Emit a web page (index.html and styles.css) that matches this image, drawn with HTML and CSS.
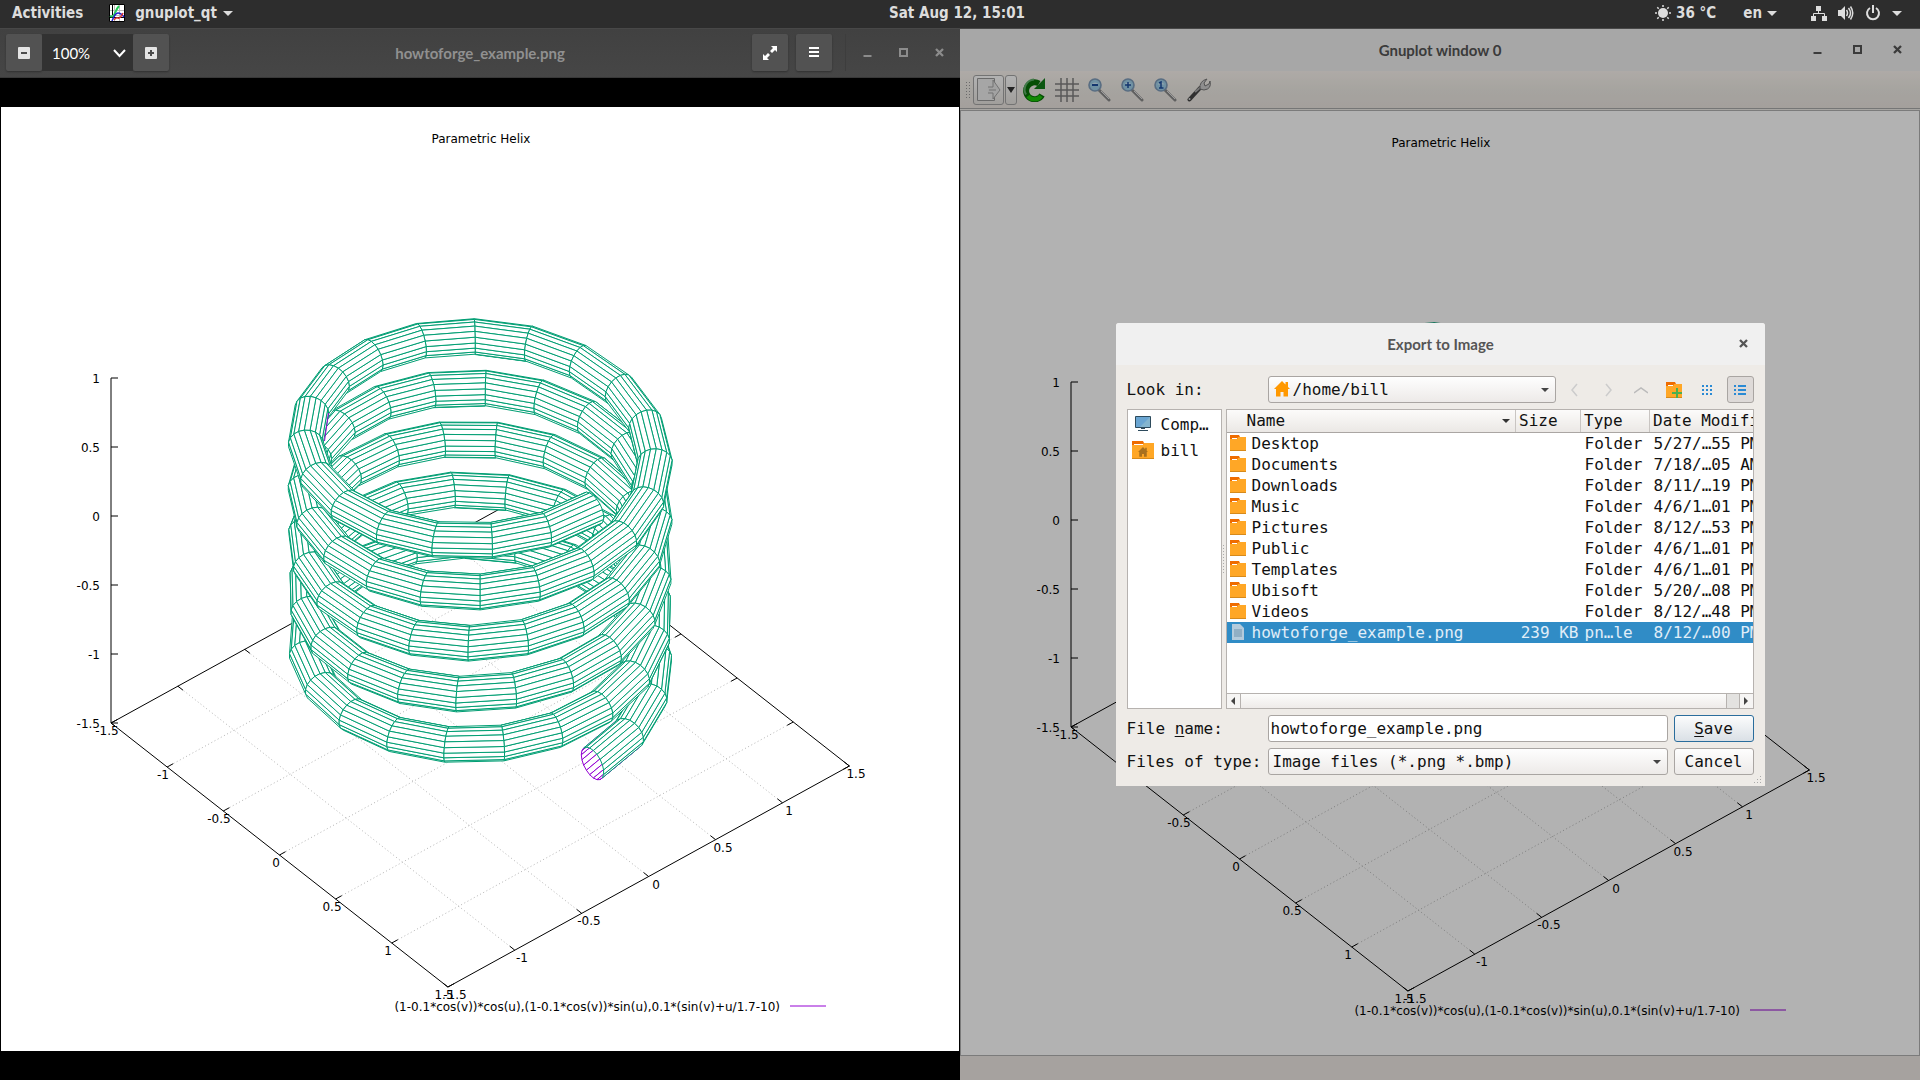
FILE: index.html
```html
<!DOCTYPE html>
<html lang="en">
<head>
<meta charset="UTF-8">
<meta name="viewport" content="width=device-width">
<title>Gnuplot window 0</title>
<link rel="stylesheet" href="styles.css">
</head>
<body>
<svg class="defs" width="0" height="0">
	<symbol id="folder" viewBox="0 0 16 16">
		<path d="M0 0h9l1 2v4H0z" fill="#ef6c00"/>
		<path d="M0 4h7l1-2h8v14H0z" fill="#ffa726"/>
		<path d="M2 3h5v1H2z" fill="#fff"/>
		<path d="M0 15h16v1H0z" fill="#d68a1c"/>
	</symbol>
	<symbol id="house" viewBox="0 0 16 16">
		<path d="M8 0L0 8h2v7.500h4.500V11h3v4.500H14V8h2l-2-2V1h-2.500v2.500z"/>
	</symbol>
	<symbol id="down" viewBox="0 0 10 5">
		<path d="M0 0h10L5 5z" fill="currentColor"/>
	</symbol>
	<symbol id="close" viewBox="0 0 9 9">
		<path d="M1 1l7 7M8 1L1 8" fill="none" stroke="currentColor" stroke-width="2.300"/>
	</symbol>
	<symbol id="maximize" viewBox="0 0 9 9">
		<path d="M1 1h7v7H1z" fill="none" stroke="currentColor" stroke-width="2"/>
	</symbol>
	<symbol id="minimize" viewBox="0 0 9 9">
		<path d="M.5 7h8v2h-8z" fill="currentColor"/>
	</symbol>
	<symbol id="lens" viewBox="0 0 24 24">
		<path d="M11 12l10 10" stroke="#8a8a8a" stroke-width="3" stroke-linecap="round"/>
		<path d="M13 13l8 8" stroke="#e0e0e0" stroke-width="1"/>
		<circle cx="7" cy="7" r="6" fill="#9fd0ea" stroke="#7f9cba" stroke-width="1.600"/>
		<path d="M3.500 6.500a4 4 0 0 1 7 0z" fill="#cfeaf8"/>
	</symbol>
</svg>

<header class="topbar">
	<div class="topbar-side">
		<button class="top-item">Activities</button>
		<button class="top-item app-menu">
			<svg width="16" height="18" viewBox="0 0 16 18">
				<path d="M.5.5h15v17H.5z" fill="#fff" stroke="#000"/>
				<path d="M5.500 1v16M10.500 1v16M1 6.500h14M1 11.500h14" stroke="#bbb"/>
				<path d="M3.500 1v10M1 13.500h14" stroke="#000"/>
				<path d="M1 12q3 2 5-3t4-7" fill="none" stroke="#2c5" stroke-width="2"/>
				<path d="M3 17q3-8 6-8t6 4" fill="none" stroke="#22c" stroke-width="1.500"/>
				<path d="M5 16q2-3 4-2t5-5" fill="none" stroke="#d33" stroke-width="1.500"/>
			</svg>
			<span>gnuplot_qt</span>
			<svg class="caret" width="10" height="5"><use href="#down"/></svg>
		</button>
	</div>
	<button class="top-item clock">Sat Aug 12, 15:01</button>
	<div class="topbar-side status">
		<button class="top-item weather">
			<svg width="16" height="16" viewBox="0 0 16 16">
				<circle cx="8" cy="8" r="5" fill="#ddd"/>
				<path d="M8 0v2M8 14v2M0 8h2M14 8h2M2.300 2.300l1.400 1.400M12.300 12.300l1.400 1.400M13.700 2.300l-1.400 1.400M3.700 12.300l-1.400 1.400" stroke="#ddd" stroke-width="1.500"/>
			</svg>
			<span>36 °C</span>
		</button>
		<button class="top-item lang"><span>en</span><svg width="10" height="5"><use href="#down"/></svg></button>
		<button class="top-item system" aria-label="System">
			<svg width="16" height="16" viewBox="0 0 16 16">
				<path d="M5 1h5v5H5zM0 11h5v5H0zM11 11h5v5h-5z" fill="#ddd"/>
				<path d="M7.500 5v3.500M2.500 12V8.500h11V12" fill="none" stroke="#ddd"/>
			</svg>
			<svg width="16" height="16" viewBox="0 0 16 16">
				<path d="M0 5h3l4-4v14l-4-4H0z" fill="#ddd"/>
				<path d="M8.500 5q2 3 0 6M10.500 3q4 5 0 10M12.500 1.500q4.500 6.500 0 13" fill="none" stroke="#ddd" stroke-width="1.500"/>
			</svg>
			<svg width="16" height="16" viewBox="0 0 16 16">
				<path d="M5 3a6 6 0 1 0 6 0M8 0v8" fill="none" stroke="#ddd" stroke-width="2"/>
			</svg>
			<svg width="10" height="5"><use href="#down"/></svg>
		</button>
	</div>
</header>

<main class="desktop">
	<section class="window viewer">
		<header class="viewer-bar">
			<div class="zoom">
				<button class="dark-btn" aria-label="Zoom out">
					<svg width="12" height="12" viewBox="0 0 12 12"><rect width="12" height="12" rx="1" fill="#e4e4e4"/><path d="M3 5h6v2H3z" fill="#4c4c4c"/></svg>
				</button>
				<label class="zoom-level">
					<select aria-label="Zoom"><option>100%</option></select>
					<svg width="13" height="9" viewBox="0 0 13 9"><path d="M1 1l5.500 6L12 1" fill="none" stroke="#fff" stroke-width="2"/></svg>
				</label>
				<button class="dark-btn" aria-label="Zoom in">
					<svg width="12" height="12" viewBox="0 0 12 12"><rect width="12" height="12" rx="1" fill="#e4e4e4"/><path d="M3 5h2V3h2v2h2v2H7v2H5V7H3z" fill="#4c4c4c"/></svg>
				</button>
			</div>
			<h1 class="viewer-title">howtoforge_example.png</h1>
			<div class="viewer-actions">
				<button class="dark-btn" aria-label="Fullscreen">
					<svg width="14" height="14" viewBox="0 0 14 14"><path d="M8 0h6v6l-2-2-3 3-2-2 3-3zM6 14H0V8l2 2 3-3 2 2-3 3z" fill="#fff"/></svg>
				</button>
				<button class="dark-btn" aria-label="Menu">
					<svg width="10" height="11" viewBox="0 0 10 11"><path d="M0 0h10v2H0zM0 4h10v2H0zM0 8h10v2H0z" fill="#fff"/></svg>
				</button>
				<div class="win-btns viewer-win">
					<button aria-label="Minimize"><svg width="9" height="9"><use href="#minimize"/></svg></button>
					<button aria-label="Maximize"><svg width="9" height="9"><use href="#maximize"/></svg></button>
					<button aria-label="Close"><svg width="9" height="9"><use href="#close"/></svg></button>
				</div>
			</div>
		</header>
		<div class="image-area">
			<svg class="plot" viewBox="0 0 958 944"></svg>
		</div>
	</section>

	<section class="window gnuplot">
		<header class="gnuplot-bar">
			<h1 class="gnuplot-title">Gnuplot window 0</h1>
			<div class="win-btns">
				<button aria-label="Minimize"><svg width="9" height="9"><use href="#minimize"/></svg></button>
				<button aria-label="Maximize"><svg width="9" height="9"><use href="#maximize"/></svg></button>
				<button aria-label="Close"><svg width="9" height="9"><use href="#close"/></svg></button>
			</div>
		</header>
		<div class="toolbar">
			<span class="grip"></span>
			<button class="tool framed" aria-label="Export">
				<svg width="24" height="24" viewBox="0 0 24 24">
					<path d="M.5.5h17v22H.500z" fill="#eee" stroke="#999"/>
					<path d="M11 9h5V2l7 10-7 9v-6h-5M12 12h7" fill="#e8e8e8" stroke="#a4a4a4"/>
				</svg>
			</button>
			<button class="tool framed drop" aria-label="Export options"><svg width="8" height="6" viewBox="0 0 8 6"><path d="M0 0h8L4 6z" fill="#333"/></svg></button>
			<button class="tool" aria-label="Replot">
				<svg width="24" height="24" viewBox="0 0 24 24">
					<path d="M17 5.500A8.500 8.500 0 1 0 20 17" fill="none" stroke="#087008" stroke-width="6"/>
					<path d="M12 1.500a10 10 0 0 0-8 15" fill="none" stroke="#5fae69" stroke-width="2"/>
					<path d="M6 18a8 8 0 0 0 13 0" fill="none" stroke="#1bc408" stroke-width="4"/>
					<path d="M23 0v11H12z" fill="#107c18"/>
				</svg>
			</button>
			<button class="tool" aria-label="Grid">
				<svg width="24" height="24" viewBox="0 0 24 24"><path d="M6 0v24M12 0v24M18 0v24M0 6h24M0 12h24M0 18h24" stroke="#808080" stroke-width="1.500"/></svg>
			</button>
			<button class="tool" aria-label="Previous zoom">
				<svg width="24" height="24" viewBox="0 0 24 24"><use href="#lens"/><path d="M4 7h6" stroke="#1e4fa0" stroke-width="2"/></svg>
			</button>
			<button class="tool" aria-label="Next zoom">
				<svg width="24" height="24" viewBox="0 0 24 24"><use href="#lens"/><path d="M4 7h6M7 4v6" stroke="#1e4fa0" stroke-width="1.500"/></svg>
			</button>
			<button class="tool" aria-label="Autoscale">
				<svg width="24" height="24" viewBox="0 0 24 24"><use href="#lens"/><path d="M5 5l2-1v6M5 10h4.500" fill="none" stroke="#1e4fa0" stroke-width="1.500"/></svg>
			</button>
			<button class="tool" aria-label="Settings">
				<svg width="24" height="24" viewBox="0 0 24 24">
					<path d="M2.500 21.500L13 10" stroke="#444" stroke-width="4" stroke-linecap="round"/>
					<path d="M8 14l7-6" stroke="#aaa" stroke-width="2"/>
					<path d="M13 11q-1-8 7-10l-3 4 1 3 4-2 1-3q2 8-6 9z" fill="#ccc" stroke="#777"/>
					<circle cx="2.500" cy="21" r="1" fill="#ddd"/>
				</svg>
			</button>
		</div>
		<div class="canvas">
			<svg class="plot" viewBox="0 0 958 944"></svg>
		</div>
		<footer class="statusbar"></footer>

		<div class="dim">
			<form class="dialog" onsubmit="return false">
				<header class="dialog-bar">
					<h2 class="dialog-title">Export to Image</h2>
					<button type="button" class="dialog-close" aria-label="Close"><svg width="9" height="9"><use href="#close"/></svg></button>
				</header>
				<div class="dialog-body">
					<div class="field-row">
						<label class="field-label" for="lookin">Look in:</label>
						<div class="combo lookin">
							<svg class="combo-icon" width="16" height="16" fill="#ff9800"><use href="#house"/></svg>
							<select id="lookin"><option>/home/bill</option></select>
							<svg class="combo-arrow" width="8" height="4"><use href="#down"/></svg>
						</div>
						<div class="nav-btns">
							<button type="button" aria-label="Back"><svg width="8" height="14" viewBox="0 0 8 14"><path d="M6 1L1 7l5 6" fill="none" stroke="#ccc" stroke-width="1.500"/></svg></button>
							<button type="button" aria-label="Forward"><svg width="8" height="14" viewBox="0 0 8 14"><path d="M2 1l5 6-5 6" fill="none" stroke="#ccc" stroke-width="1.500"/></svg></button>
							<button type="button" aria-label="Parent"><svg width="14" height="8" viewBox="0 0 14 8"><path d="M0 7l7-5 7 5" fill="none" stroke="#bbb" stroke-width="1.500"/></svg></button>
							<button type="button" aria-label="New folder"><svg width="16" height="16" viewBox="0 0 16 16"><use href="#folder"/><path d="M11 6v10M6 11h10" stroke="#4caf50" stroke-width="2"/></svg></button>
							<button type="button" aria-label="List view"><svg width="10" height="10" viewBox="0 0 10 10"><path d="M0 1h10M0 5h10M0 9h10" stroke="#2a8ad4" stroke-width="2" stroke-dasharray="2 2"/></svg></button>
							<button type="button" class="pressed" aria-label="Detail view"><svg width="12" height="10" viewBox="0 0 12 10"><path d="M0 1h2m2 0h8M0 5h2m2 0h8M0 9h2m2 0h8" stroke="#2a8ad4" stroke-width="2"/></svg></button>
						</div>
					</div>

					<div class="panes">
						<ul class="places">
							<li>
								<svg width="22" height="18" viewBox="0 0 22 18">
									<path d="M3.500 1.500h15v11h-15z" fill="#6aa5d2" stroke="#2d4a5c"/>
									<path d="M18 2v10H8z" fill="#84b5cf"/>
									<path d="M9 13h4v1H9zM6 15h10v1H6z" fill="#2d4a5c"/>
								</svg>
								<span>Comp…</span>
							</li>
							<li>
								<svg width="22" height="18" viewBox="0 0 22 18">
									<path d="M0 0h11l1 2v4H0z" fill="#ef6c00"/>
									<path d="M0 4h10l2-2h10v15H0z" fill="#ffa726"/>
									<path d="M2 3h9v1H2z" fill="#fff"/>
									<path d="M0 17h22v1H0z" fill="#d68a1c"/>
									<use href="#house" x="5" y="6" width="12" height="10" fill="#a8701e"/>
								</svg>
								<span>bill</span>
							</li>
						</ul>
						<span class="splitter"></span>
						<div class="files">
							<table>
								<colgroup><col class="c-name"><col class="c-size"><col class="c-type"><col class="c-date"></colgroup>
								<thead>
									<tr><th class="h-name">Name<svg class="sort" width="8" height="4"><use href="#down"/></svg></th><th>Size</th><th>Type</th><th>Date Modified</th></tr>
								</thead>
								<tbody id="rows"></tbody>
							</table>
							<div class="scroll"><button type="button" aria-label="Scroll left"><svg width="4" height="8" viewBox="0 0 4 8"><path d="M4 0v8L0 4z" fill="#444"/></svg></button><span class="thumb"></span><span class="track"></span><button type="button" aria-label="Scroll right"><svg width="4" height="8" viewBox="0 0 4 8"><path d="M0 0v8l4-4z" fill="#444"/></svg></button></div>
						</div>
					</div>

					<div class="field-row">
						<label class="field-label" for="fname">File <u>n</u>ame:</label>
						<input class="fname" id="fname" type="text" value="howtoforge_example.png">
						<button class="push default"><u>S</u>ave</button>
					</div>
					<div class="field-row">
						<label class="field-label" for="ftype">Files of type:</label>
						<div class="combo">
							<select id="ftype"><option>Image files (*.png *.bmp)</option></select>
							<svg class="combo-arrow" width="8" height="4"><use href="#down"/></svg>
						</div>
						<button type="button" class="push">Cancel</button>
					</div>
				</div>
				<span class="size-grip"></span>
			</form>
		</div>
	</section>
</main>
<script src="script.js"></script>
</body>
</html>
```
FILE: styles.css
```css
* {
	box-sizing: border-box;
}
body {
	display: flex;
	flex-direction: column;
	height: 100vh;
	margin: 0;
	overflow: hidden;
	background: #000;
	font-family: "Noto Sans", sans-serif;
}
button, input, select {
	margin: 0;
	padding: 0;
	border: 0;
	background: none;
	color: inherit;
	font: inherit;
}
h1, h2 {
	margin: 0;
}
svg {
	display: block;
	flex: none;
}
.defs {
	position: absolute;
}

/* top bar */
.topbar {
	display: flex;
	align-items: center;
	flex: none;
	height: 29px;
	padding: 0 18px 2px 12px;
	border-bottom: 1px solid #484848;
	background: #2d2d2d;
	color: #ddd;
	font: bold 15px "DejaVu Sans Condensed", "Noto Sans", sans-serif;
}
.topbar-side {
	display: flex;
	flex: 1;
}
.top-item {
	display: flex;
	align-items: center;
}
.app-menu {
	gap: 10px;
	margin-left: 26px;
}
.app-menu .caret {
	margin-left: -4px;
}
.status {
	justify-content: flex-end;
}
.weather {
	gap: 5px;
}
.lang {
	gap: 5px;
	margin-left: 27px;
}
.system {
	gap: 11px;
	margin-left: 34px;
}

/* windows */
.desktop {
	display: flex;
	flex: 1;
	min-height: 0;
}
.window {
	display: flex;
	flex-direction: column;
	flex: 1;
	min-width: 0;
}
.win-btns {
	display: flex;
	align-items: center;
}
.plot {
	width: 100%;
	height: 100%;
	background: #fff;
}
.plot text {
	font: 12px "DejaVu Sans", sans-serif;
}

/* image viewer */
.viewer-bar {
	display: flex;
	align-items: center;
	flex: none;
	height: 49px;
	padding: 0 16px 1px 6px;
	border-bottom: 1px solid #383838;
	background: linear-gradient(#414141, #464646);
	color: #fff;
	font-size: 15px;
}
.zoom {
	display: flex;
	flex: 1;
}
.dark-btn {
	display: flex;
	align-items: center;
	justify-content: center;
	width: 36px;
	height: 37px;
	border-radius: 2px;
	background: #525252;
	box-shadow: 0 1px 2px rgba(0, 0, 0, .3);
}
.zoom-level {
	position: relative;
	width: 91px;
	background: #323232;
	font-family: Lato, sans-serif;
}
.zoom-level select {
	width: 100%;
	height: 100%;
	padding: 0 10px;
	appearance: none;
}
.zoom-level svg {
	position: absolute;
	right: 7px;
	top: 15px;
	pointer-events: none;
}
.viewer-title, .gnuplot-title, .dialog-title {
	font: bold 15px Lato, sans-serif;
}
.viewer-title {
	padding-left: 10px;
	color: #909090;
}
.viewer-actions {
	display: flex;
	flex: 1;
	justify-content: flex-end;
	gap: 8px;
}
.viewer-win {
	gap: 27px;
	margin-left: 5px;
	padding-left: 17px;
	border-left: 1px solid #3d3d3d;
	color: #8c8c8c;
}
.image-area {
	flex: 1;
	min-height: 0;
	padding: 29px 1px;
	background: #000;
}

/* gnuplot window */
.gnuplot {
	position: relative;
	background: #eeebe7;
}
.gnuplot-bar {
	display: flex;
	align-items: center;
	flex: none;
	height: 42px;
	padding: 0 18px 1px;
	background: #f0f0f0;
	color: #555;
}
.gnuplot-title {
	flex: 1;
	padding-left: 89px;
	text-align: center;
}
.gnuplot-bar .win-btns {
	gap: 31px;
}
.toolbar {
	display: flex;
	align-items: center;
	flex: none;
	height: 38px;
	padding: 0 5px;
	border-bottom: 1px solid #aaa;
	background: linear-gradient(#faf4ef, #eeebe5 50%, #ebe5e0);
}
.grip {
	width: 5px;
	height: 18px;
	margin-right: 3px;
	background: radial-gradient(#999 1px, transparent 1px) 0 0 / 3px 3px;
}
.tool {
	display: flex;
	align-items: center;
	justify-content: center;
	width: 33px;
	height: 30px;
}
.framed {
	width: 31px;
	border: 1px solid #a5a5a5;
	border-radius: 3px;
	background: linear-gradient(#fff, #e6e3df);
}
.drop {
	width: 12px;
	margin-left: 1px;
}
.canvas {
	flex: 1;
	min-height: 0;
	margin-top: 1px;
	border: 1px solid #b0b0b0;
}
.statusbar {
	flex: none;
	height: 24px;
	background: #eee8e4;
}
.dim {
	position: absolute;
	inset: 0;
	display: flex;
	align-items: center;
	justify-content: center;
	background: rgba(0, 0, 0, .3);
}

/* export dialog */
.dialog {
	position: relative;
	width: 649px;
	border-radius: 3px 3px 0 0;
	background: #eeebe7;
	color: #111;
	font: 16px "DejaVu Sans Mono", monospace;
}
.dialog-bar {
	display: flex;
	align-items: center;
	height: 42px;
	padding: 0 17px 1px 18px;
	border-radius: 3px 3px 0 0;
	background: #f0f0f0;
	color: #555;
}
.dialog-title {
	flex: 1;
	padding-left: 9px;
	text-align: center;
}
.dialog-body {
	display: flex;
	flex-direction: column;
	gap: 6px;
	padding: 11px;
}
.field-row {
	display: flex;
	align-items: center;
	height: 27px;
}
.field-label {
	width: 141px;
}
u {
	text-underline-offset: 2px;
}
.combo {
	position: relative;
	flex: 1;
	height: 27px;
	border: 1px solid #a9a5a2;
	border-radius: 3px;
	background: linear-gradient(#fefefe, #edeae8);
}
.combo select {
	width: 100%;
	height: 100%;
	padding: 0 4px;
	appearance: none;
}
.combo-arrow {
	position: absolute;
	right: 6px;
	top: 11px;
	color: #444;
	pointer-events: none;
}
.combo-icon {
	position: absolute;
	left: 5px;
	top: 4px;
	pointer-events: none;
}
.combo.lookin select {
	padding-left: 24px;
}
.nav-btns {
	display: flex;
	margin-left: 3px;
}
.nav-btns button {
	display: flex;
	align-items: center;
	justify-content: center;
	width: 33px;
	height: 27px;
}
.nav-btns .pressed {
	width: 27px;
	margin-left: 3px;
	border: 1px solid #a9a5a2;
	border-radius: 3px;
	background: #dedad8;
}
.panes {
	display: flex;
	height: 300px;
}
.places {
	width: 95px;
	margin: 0;
	padding: 1px 4px;
	border: 1px solid #b6b2af;
	background: #fff;
	list-style: none;
}
.places li {
	display: flex;
	align-items: center;
	gap: 7px;
	height: 26px;
}
.splitter {
	align-self: center;
	width: 4px;
	height: 30px;
	background: radial-gradient(#aaa 1px, transparent 1px) 0 0 / 3px 3px;
}
.files {
	display: flex;
	flex-direction: column;
	flex: 1;
	min-width: 0;
	overflow: hidden;
	border: 1px solid #b6b2af;
	background: #fff;
}
.files table {
	width: 100%;
	border-collapse: collapse;
	table-layout: fixed;
}
.c-size {
	width: 65px;
}
.c-type {
	width: 69px;
}
.c-date {
	width: 103px;
}
.files th, .files td {
	height: 21px;
	padding: 0 0 0 4px;
	overflow: hidden;
	font-weight: normal;
	line-height: 21px;
	text-align: left;
	white-space: nowrap;
}
.files th {
	height: 22px;
	padding-left: 3px;
	border-right: 1px solid #c9c5c2;
	border-bottom: 1px solid #aaa6a3;
	background: linear-gradient(#fcfbfa, #ebe8e5);
}
.files th:last-child {
	border-right: 0;
}
.files .h-name {
	position: relative;
	padding-left: 20px;
}
.sort {
	position: absolute;
	right: 5px;
	top: 9px;
	color: #333;
}
.file {
	display: flex;
	align-items: center;
	height: 21px;
	gap: 6px;
}
.files td:first-child {
	padding-left: 3px;
}
.files .size {
	padding-right: 2px;
	text-align: right;
}
.selected {
	background: #308cc6;
	color: #e0eef8;
}
.scroll {
	display: flex;
	height: 15px;
	margin-top: auto;
	border-top: 1px solid #b6b2af;
	background: #f6f5f4;
}
.scroll button {
	display: flex;
	align-items: center;
	justify-content: center;
	width: 13px;
}
.thumb {
	flex: 1;
	border: solid #b6b2af;
	border-width: 0 1px;
	background: linear-gradient(#fcfcfb, #eeebe9);
}
.track {
	width: 13px;
	border-right: 1px solid #b6b2af;
	background: #e3e2e0;
}
.fname {
	flex: 1;
	min-width: 0;
	height: 27px;
	padding: 0 2px;
	border: 1px solid #a9a5a2;
	border-radius: 3px;
	background: #fff;
}
.push {
	width: 80px;
	height: 27px;
	margin-left: 6px;
	border: 1px solid #a9a5a2;
	border-radius: 3px;
	background: linear-gradient(#fefefe, #edeae8);
}
.default {
	border-color: #2a6d9c;
	background: linear-gradient(#fbfcfc, #dae0e6);
}
.size-grip {
	position: absolute;
	right: 2px;
	bottom: 2px;
	width: 10px;
	height: 12px;
	background: radial-gradient(#aaa 1px, transparent 1px) 0 0 / 3px 3px;
	clip-path: polygon(100% 0, 100% 100%, 0 100%);
}
```
FILE: script.js
```js
/* file list */
(function(){
	var files = [
		['Desktop', '5/27/…55 PM'],
		['Documents', '7/18/…05 AM'],
		['Downloads', '8/11/…19 PM'],
		['Music', '4/6/1…01 PM'],
		['Pictures', '8/12/…53 PM'],
		['Public', '4/6/1…01 PM'],
		['Templates', '4/6/1…01 PM'],
		['Ubisoft', '5/20/…08 PM'],
		['Videos', '8/12/…48 PM']
	];
	var folder = '<svg width="16" height="16"><use href="#folder"/></svg>';
	var page = '<svg width="16" height="16" viewBox="0 0 16 16"><path d="M2 0h8l4 4v12H2z" fill="#b4cbdc"/><path d="M4 6h8M4 8h8M4 10h8M4 12h8" stroke="#6f93ad"/></svg>';
	var inner = '';
	for(var i = 0; i < files.length; i++){
		inner += '<tr><td><div class="file">' + folder + files[i][0] + '</div></td><td></td><td>Folder</td><td>' + files[i][1] + '</td></tr>';
	}
	inner += '<tr class="selected"><td><div class="file">' + page + 'howtoforge_example.png</div></td><td class="size">239 KB</td><td>pn…le</td><td>8/12/…00 PM</td></tr>';
	document.querySelector('#rows').innerHTML = inner;
})();

/* parametric helix */
(function(){
	var A = 50*Math.PI/180;
	var T = 49*Math.PI/180;
	var ZS = 1.047;
	var out = '';

	function project(p){
		return [
			479.2 + 112.3*p[0] + 133.8*p[1],
			430.5 + 88*p[0] - 73.7*p[1] - 138*p[2]
		];
	}
	// distance towards the viewer
	function depth(p){
		return Math.sin(T)*(Math.sin(A)*p[0] - Math.cos(A)*p[1]) + Math.cos(T)*ZS*p[2];
	}
	function line(a, b, attr){
		a = project(a);
		b = project(b);
		out += '<path d="M' + a[0].toFixed(1) + ' ' + a[1].toFixed(1) + 'L' + b[0].toFixed(1) + ' ' + b[1].toFixed(1) + '" ' + attr + '/>';
	}
	function text(x, y, anchor, s){
		out += '<text x="' + x + '" y="' + y + '" text-anchor="' + anchor + '">' + s + '</text>';
	}
	function surface(u, v){
		var r = 1 - 0.1*Math.cos(v);
		return [r*Math.cos(u), r*Math.sin(u), 0.1*(Math.sin(v) + u/1.7 - 10)];
	}

	var B = -1.5, E = 1.5, t, p;
	var dots = 'stroke="#b4b4b4" stroke-dasharray="1 2.6"';
	var axis = 'stroke="#000"';
	for(t = -1; t <= 1; t += 0.5){
		line([t, B, B], [t, E, B], dots);
		line([B, t, B], [E, t, B], dots);
	}
	line([B, B, B], [E, B, B], axis);
	line([E, B, B], [E, E, B], axis);
	line([B, B, B], [B, E, B], axis);
	line([B, E, B], [E, E, B], axis);
	line([B, B, B], [B, B, 1], axis);
	for(t = B; t <= E; t += 0.5){
		line([t, B, B], [t, B + 0.045, B], axis);
		line([t, E, B], [t, E - 0.045, B], axis);
		line([B, t, B], [B + 0.045, t, B], axis);
		line([E, t, B], [E - 0.045, t, B], axis);
		p = project([t, B, B]);
		text(Math.round(p[0]) - 4, Math.round(p[1]) + 12, 'middle', t);
		p = project([E, t, B]);
		text(Math.round(p[0]) + 7, Math.round(p[1]) + 12, 'middle', t);
		if(t <= 1){
			p = project([B, B, t]);
			out += '<path d="M110 ' + Math.round(p[1]) + 'h7" ' + axis + '/>';
			text(99, Math.round(p[1]) + 5, 'end', t);
		}
	}

	var NU = 99, NV = 19, quads = [];
	for(var i = 0; i < NU; i++){
		for(var j = 0; j < NV; j++){
			var u0 = i*10*Math.PI/NU, u1 = (i + 1)*10*Math.PI/NU;
			var v0 = j*2*Math.PI/NV, v1 = (j + 1)*2*Math.PI/NV;
			var um = (u0 + u1)/2, vm = (v0 + v1)/2;
			var c = [surface(u0, v0), surface(u1, v0), surface(u1, v1), surface(u0, v1)];
			var n = [-Math.cos(vm)*Math.cos(um), -Math.cos(vm)*Math.sin(um), Math.sin(vm)];
			// the inside of the tube only shows at its open end
			var color = depth(n) > 0 ? '#009e73' : (i === 0 ? '#9400d3' : 'none');
			quads.push({
				d: (depth(c[0]) + depth(c[1]) + depth(c[2]) + depth(c[3]))/4,
				color: color,
				pts: c.map(project)
			});
		}
	}
	quads.sort(function(a, b){
		return a.d - b.d;
	});
	quads.forEach(function(q){
		var s = q.pts.map(function(p){
			return p[0].toFixed(1) + ',' + p[1].toFixed(1);
		}).join(' ');
		out += '<polygon points="' + s + '" fill="#fff" stroke="' + q.color + '" stroke-linejoin="round"/>';
	});
	out += '<path d="M327.500 306L323.500 334" stroke="#9400d3"/>';

	text(480, 36, 'middle', 'Parametric Helix');
	text(779, 904, 'end', '(1-0.1*cos(v))*cos(u),(1-0.1*cos(v))*sin(u),0.1*(sin(v)+u/1.7-10)');
	out += '<path d="M789 899h36" stroke="#9400d3"/>';

	var plots = document.querySelectorAll('.plot');
	for(var k = 0; k < plots.length; k++){
		plots[k].innerHTML = out;
	}
})();
```
